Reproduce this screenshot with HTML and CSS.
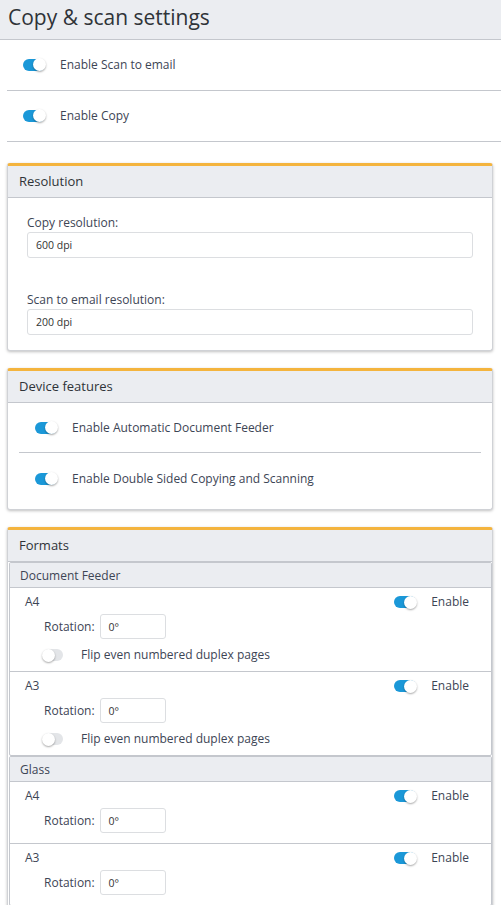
FILE: index.html
```html
<!DOCTYPE html>
<html>
<head>
<meta charset="utf-8">
<link rel="stylesheet" href="styles.css">
</head>
<body>
<div class="titlebar"><h1 class="title">Copy &amp; scan settings</h1></div>

<div class="toplist">
  <div class="toprow"><span class="toggle on"><span class="knob"></span></span><span class="lbl">Enable Scan to email</span></div>
  <div class="toprow"><span class="toggle on"><span class="knob"></span></span><span class="lbl">Enable Copy</span></div>
</div>

<div class="card">
  <div class="card-head">Resolution</div>
  <div class="card-body res">
    <div class="field-label">Copy resolution:</div>
    <div class="input wide">600 dpi</div>
    <div class="field-label second">Scan to email resolution:</div>
    <div class="input wide">200 dpi</div>
  </div>
</div>

<div class="card">
  <div class="card-head">Device features</div>
  <div class="card-body dev">
    <div class="devrow"><span class="toggle on"><span class="knob"></span></span><span class="lbl">Enable Automatic Document Feeder</span></div>
    <div class="devrow"><span class="toggle on"><span class="knob"></span></span><span class="lbl">Enable Double Sided Copying and Scanning</span></div>
  </div>
</div>

<div class="card last">
  <div class="card-head">Formats</div>
  <div class="card-body fmt">
    <div class="panel">
      <div class="panel-head">Document Feeder</div>
      <div class="item feeder">
        <div class="item-top"><span class="size">A4</span><span class="en"><span class="toggle on"><span class="knob"></span></span><span class="lbl">Enable</span></span></div>
        <div class="rot"><span class="rot-lbl">Rotation:</span><span class="input small">0°</span></div>
        <div class="flip"><span class="toggle off"><span class="knob"></span></span><span class="lbl">Flip even numbered duplex pages</span></div>
      </div>
      <div class="item feeder">
        <div class="item-top"><span class="size">A3</span><span class="en"><span class="toggle on"><span class="knob"></span></span><span class="lbl">Enable</span></span></div>
        <div class="rot"><span class="rot-lbl">Rotation:</span><span class="input small">0°</span></div>
        <div class="flip"><span class="toggle off"><span class="knob"></span></span><span class="lbl">Flip even numbered duplex pages</span></div>
      </div>
    </div>
    <div class="panel">
      <div class="panel-head">Glass</div>
      <div class="item">
        <div class="item-top"><span class="size">A4</span><span class="en"><span class="toggle on"><span class="knob"></span></span><span class="lbl">Enable</span></span></div>
        <div class="rot"><span class="rot-lbl">Rotation:</span><span class="input small">0°</span></div>
      </div>
      <div class="item">
        <div class="item-top"><span class="size">A3</span><span class="en"><span class="toggle on"><span class="knob"></span></span><span class="lbl">Enable</span></span></div>
        <div class="rot"><span class="rot-lbl">Rotation:</span><span class="input small">0°</span></div>
      </div>
    </div>
  </div>
</div>
</body>
</html>
```

FILE: styles.css
```css
* { box-sizing: border-box; }
body {
  margin: 0;
  font-family: "Open Sans", "Noto Sans", sans-serif;
  color: #3d4555;
  font-size: 12px;
  background: #fff;
}
.titlebar {
  background: #ebedf1;
  border-bottom: 1px solid #c4c7cd;
  height: 40px;
  display: flex;
  align-items: center;
  padding-left: 8px;
}
.title {
  margin: 0;
  font-weight: 400;
  font-size: 21px;
  color: #2f3338;
  line-height: 1;
  padding-bottom: 4px;
}
.toplist { margin-left: 7px; margin-bottom: 21px; }
.toprow {
  height: 51px;
  border-bottom: 1px solid #c4c7cd;
  display: flex;
  align-items: center;
  padding-left: 16px;
  padding-bottom: 1px;
}
.toggle {
  width: 22px;
  height: 12px;
  border-radius: 6px;
  display: inline-flex;
  align-items: center;
  flex: none;
}
.toggle.on { background: #1b98d8; justify-content: flex-end; }
.toggle.off { background: #e3e5e8; justify-content: flex-start; }
.knob {
  width: 13px;
  height: 13px;
  border-radius: 50%;
  background: #fff;
  box-shadow: 0 1px 2px rgba(0,0,0,0.35);
}
.toggle.on .knob { margin-right: -1px; }
.toggle.off .knob { margin-left: -1px; }
.lbl { margin-left: 15px; line-height: 16px; }
.card {
  margin: 0 8px 17px 7px;
  border: 1px solid #d0d2d6;
  border-top: 3px solid #f4b43e;
  border-radius: 3px;
  box-shadow: 0 1px 3px rgba(0,0,0,0.25);
  background: #fff;
}
.card.last { margin-bottom: 0; }
.card-head {
  background: #ebedf1;
  border-bottom: 1px solid #c4c7cd;
  height: 32px;
  display: flex;
  align-items: center;
  padding-left: 11px;
  padding-bottom: 1px;
  font-size: 13px;
  color: #2f3338;
}
.res { padding: 16px 19px 15px 19px; }
.field-label { font-size: 12px; line-height: 17px; margin-bottom: 1px; }
.field-label.second { margin-top: 33px; }
.input {
  border: 1px solid #dcdee1;
  border-radius: 3px;
  font-size: 10.5px;
  display: flex;
  align-items: center;
  padding-left: 8px;
  color: #333;
}
.input.wide { height: 26px; }
.dev { padding: 0 11px 5px 11px; }
.devrow {
  height: 51px;
  display: flex;
  align-items: center;
  padding-left: 16px;
}
.devrow:first-child { border-bottom: 1px solid #c4c7cd; height: 50px; }
.devrow .lbl { margin-left: 15px; }
.fmt { padding: 0 0 1px 1px; display: flex; flex-direction: column; gap: 0; }
.panel {
  border: 1px solid #c4c7cd;
  border-radius: 2px;
}
.panel-head {
  background: #ebedf1;
  border-bottom: 1px solid #c4c7cd;
  height: 25px;
  display: flex;
  align-items: center;
  padding-left: 10px;
  font-size: 12px;
}
.item { padding: 6px 22px 10px 15px; border-bottom: 1px solid #c4c7cd; }
.item:last-child { border-bottom: none; }
.item.feeder { padding-bottom: 8px; }
.item-top { display: flex; justify-content: space-between; align-items: center; height: 16px; }
.size { line-height: 16px; }
.en { display: flex; align-items: center; }
.en .lbl { margin-left: 15px; }
.rot { display: flex; align-items: center; margin-top: 4px; padding-left: 19px; }
.rot-lbl { margin-right: 5px; }
.input.small { width: 66px; height: 25px; }
.flip { display: flex; align-items: center; margin-top: 8px; height: 16px; padding-left: 18px; }
.flip .toggle { width: 20px; }
.flip .lbl { margin-left: 18px; }
```
